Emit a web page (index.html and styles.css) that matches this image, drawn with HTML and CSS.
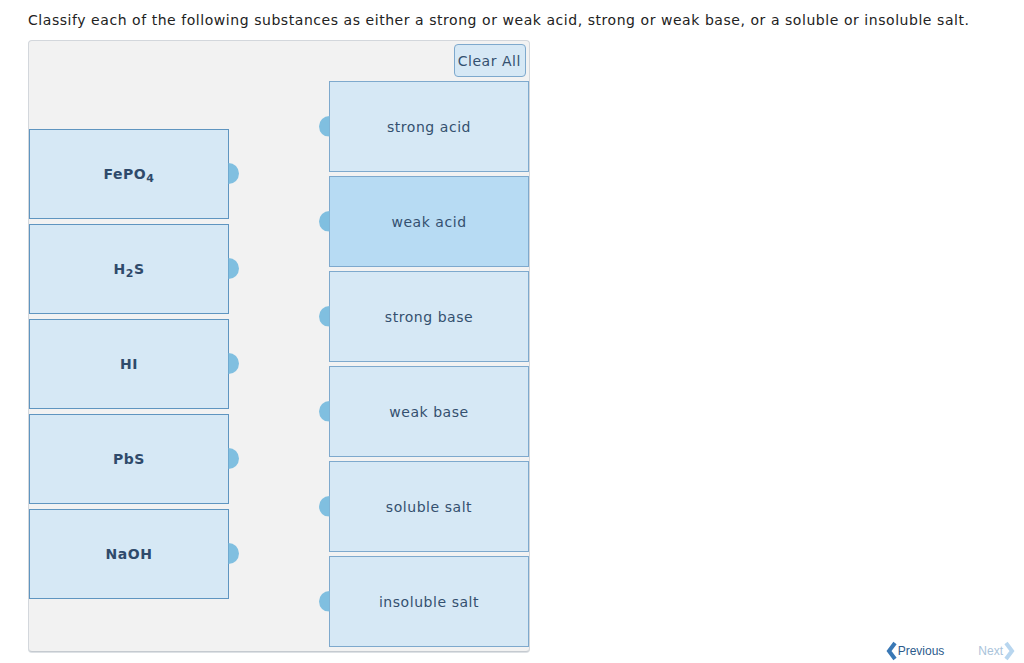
FILE: index.html
```html
<!DOCTYPE html>
<html lang="en">
<head>
  <meta charset="UTF-8">
  <title>Classify substances</title>
  <link rel="stylesheet" href="styles.css">
</head>
<body>
  <p class="prompt">Classify each of the following substances as either a strong or weak acid, strong or weak base, or a soluble or insoluble salt.</p>

  <div class="page-row">
    <!-- matching area -->
    <div class="board">
      <div class="col col-left">
        <div class="item"><b>FePO<sub>4</sub></b><span class="dot dot-right"></span></div>
        <div class="item"><b>H<sub>2</sub>S</b><span class="dot dot-right"></span></div>
        <div class="item"><b>HI</b><span class="dot dot-right"></span></div>
        <div class="item"><b>PbS</b><span class="dot dot-right"></span></div>
        <div class="item"><b>NaOH</b><span class="dot dot-right"></span></div>
      </div>
      <div class="col col-right">
        <button class="clear-btn">Clear All</button>
        <div class="item target"><span class="dot dot-left"></span>strong acid</div>
        <div class="item target hover"><span class="dot dot-left"></span>weak acid</div>
        <div class="item target"><span class="dot dot-left"></span>strong base</div>
        <div class="item target"><span class="dot dot-left"></span>weak base</div>
        <div class="item target"><span class="dot dot-left"></span>soluble salt</div>
        <div class="item target"><span class="dot dot-left"></span>insoluble salt</div>
      </div>
    </div>

    <!-- pager -->
    <nav class="pager">
      <a class="pager-link">
        <svg width="11" height="20" viewBox="0 0 11 20"><polyline points="9,2 3,10 9,18" fill="none" stroke="#3a78b5" stroke-width="4"/></svg>
        Previous
      </a>
      <a class="pager-link disabled">
        Next
        <svg width="11" height="20" viewBox="0 0 11 20"><polyline points="2,2 8,10 2,18" fill="none" stroke="#b8d6ef" stroke-width="4"/></svg>
      </a>
    </nav>
  </div>
</body>
</html>
```

FILE: styles.css
```css
/* page */
body {
  margin: 0;
  padding: 0 28px;
  font-family: "DejaVu Sans", Verdana, sans-serif;
  letter-spacing: 0.55px;
  color: #222;
}
.prompt {
  margin: 10px 0 10px;
  font-size: 14px;
  line-height: 20px;
}
.page-row { display: flex; align-items: flex-end; }

/* board */
.board {
  display: flex;
  justify-content: space-between;
  width: 500px;
  height: 610px;
  margin-bottom: 9px;
  background: #f2f2f2;
  border: 1px solid #d3d7dc;
  border-bottom-color: #c5cad0;
  border-radius: 4px;
  box-shadow: 0 1px 0 #dde1e5;
}
.col { display: flex; flex-direction: column; width: 200px; }
.col-left { padding-top: 88px; }
.col-right { align-items: flex-end; }

.item {
  position: relative;
  box-sizing: border-box;
  width: 200px;
  height: 91px;
  margin-bottom: 4px;
  display: flex;
  align-items: center;
  justify-content: center;
  background: #d6e8f5;
  border: 1px solid #5f95c0;
  color: #34506f;
  font-size: 14px;
}
.col-left .item { height: 90px; margin-bottom: 5px; }
.item b { color: #2f4a6b; font-size: 14px; }
.item sub { font-size: 11px; vertical-align: -3px; line-height: 0; }
.target { border-color: #7ea9cd; }
.target.hover { background: #b7dbf3; }

.dot {
  position: absolute;
  top: 50%;
  width: 21px;
  height: 21px;
  margin-top: -11px;
  border-radius: 50%;
  background: #80bfe0;
}
.dot-right { right: -11px; clip-path: inset(0 0 0 50%); }
.dot-left { left: -11px; clip-path: inset(0 50% 0 0); }

.clear-btn {
  margin: 3px 3px 4px 0;
  height: 33px;
  padding: 0 4px 0 3px;
  font-family: inherit;
  letter-spacing: inherit;
  font-size: 14px;
  color: #34506f;
  background: #d6e8f5;
  border: 1px solid #7ea9cd;
  border-radius: 4px;
}

/* pager */
.pager {
  margin-left: auto;
  margin-right: -19px;
  display: flex;
  gap: 34px;
  font-family: "Liberation Sans", Arial, sans-serif;
  letter-spacing: 0;
  font-size: 12px;
  line-height: 20px;
}
.pager-link {
  display: flex;
  align-items: center;
  gap: 1px;
  color: #2b5b8c;
}
.pager-link.disabled { color: #a9c3da; }
```
